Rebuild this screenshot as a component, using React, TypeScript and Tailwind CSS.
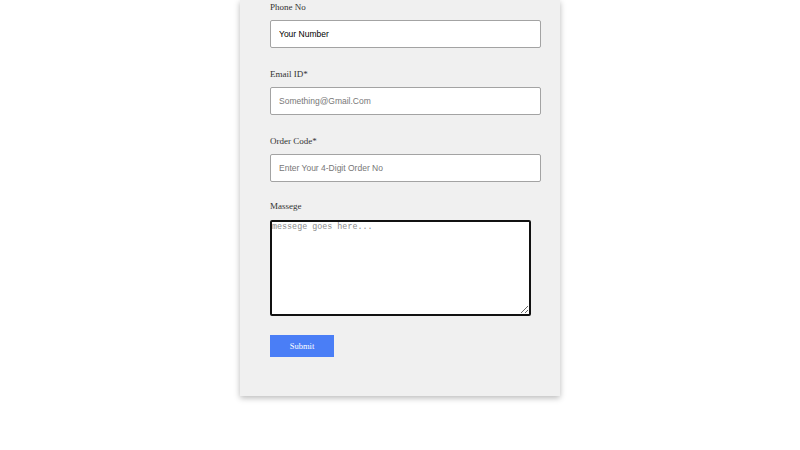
import React from 'react';

const labelCls = "block h-[14px] leading-[14px] text-[9px] text-[#333] mb-[6px]";
const inputCls =
  "block w-[271px] h-[28px] px-[8px] bg-white border border-[#a3a3a3] rounded-[2px] text-[8.5px] outline-none mb-[19px] placeholder:text-[#777]";

export default function App() {
  return (
    <div className="w-full h-[450px] bg-white overflow-hidden" style={{ fontFamily: '"Liberation Serif", serif' }}>
      <div className="w-[320px] mx-auto bg-[#f0f0f0] shadow-[0_2px_6px_rgba(0,0,0,0.28)] px-[30px] pt-0 pb-[39px]">
        <form onSubmit={(e) => e.preventDefault()}>
          {/* Phone */}
          <label className={labelCls}>Phone No</label>
          <input
            type="text"
            placeholder="Your Number"
            className={inputCls + " placeholder:text-black"}
            style={{ fontFamily: '"Liberation Sans", Arial, sans-serif' }}
          />

          {/* Email */}
          <label className={labelCls}>Email ID*</label>
          <input
            type="email"
            placeholder="Something@Gmail.Com"
            className={inputCls}
            style={{ fontFamily: '"Liberation Sans", Arial, sans-serif' }}
          />

          {/* Order code */}
          <label className={labelCls}>Order Code*</label>
          <input
            type="text"
            placeholder="Enter Your 4-Digit Order No"
            className={inputCls}
            style={{ fontFamily: '"Liberation Sans", Arial, sans-serif' }}
          />

          {/* Message */}
          <label className="block h-[14px] leading-[14px] text-[9px] text-[#333] mb-[7px] -mt-[2px]">Massege</label>
          <textarea
            placeholder="messege goes here..."
            className="block w-[261px] h-[96px] p-0 bg-white border-2 border-[#111] rounded-[2px] text-[8.4px] leading-[11px] outline-none placeholder:text-[#8a8a8a] resize"
            style={{ fontFamily: '"Liberation Mono", "DejaVu Sans Mono", monospace' }}
          />

          <button
            type="submit"
            className="block mt-[19px] w-[64px] h-[22px] bg-[#4a7ef6] text-white text-[8.5px]"
          >
            Submit
          </button>
        </form>
      </div>
    </div>
  );
}
